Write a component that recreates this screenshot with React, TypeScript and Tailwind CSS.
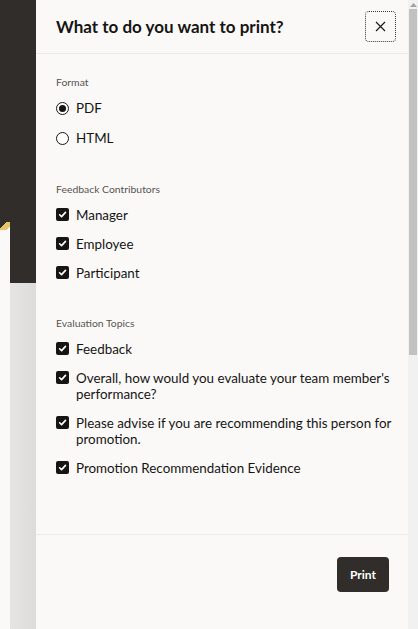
import { useState } from 'react';

const font = { fontFamily: 'Lato, "Open Sans", sans-serif' };

type Option = { id: string; label: string };

const contributors: Option[] = [
  { id: 'manager', label: 'Manager' },
  { id: 'employee', label: 'Employee' },
  { id: 'participant', label: 'Participant' },
];

const topics: Option[] = [
  { id: 'feedback', label: 'Feedback' },
  { id: 'overall', label: "Overall, how would you evaluate your team member's performance?" },
  { id: 'promotion', label: 'Please advise if you are recommending this person for promotion.' },
  { id: 'evidence', label: 'Promotion Recommendation Evidence' },
];

function CheckBox({ checked }: { checked: boolean }) {
  return (
    <span className="mt-[1px] flex h-[13px] w-[13px] shrink-0 items-center justify-center rounded-[2px] bg-[#161513]">
      {checked && (
        <svg width="9" height="9" viewBox="0 0 10 10" fill="none">
          <path d="M1.8 5.3 L4 7.4 L8.3 2.6" stroke="#fff" strokeWidth="1.8" strokeLinecap="round" strokeLinejoin="round" />
        </svg>
      )}
    </span>
  );
}

function Radio({ checked }: { checked: boolean }) {
  return (
    <span className="flex h-[13px] w-[13px] shrink-0 items-center justify-center rounded-full border border-[#161513] bg-white">
      {checked && <span className="h-[7px] w-[7px] rounded-full bg-[#161513]" />}
    </span>
  );
}

function Section({ title, children, listClass }: { title: string; children: React.ReactNode; listClass: string }) {
  return (
    <div className="mb-[34px]">
      <div className="mb-[10px] text-[10.4px] leading-[16px] text-[#58544f]">{title}</div>
      <div className={listClass}>{children}</div>
    </div>
  );
}

export default function App() {
  const [format, setFormat] = useState<'pdf' | 'html'>('pdf');
  const [checked, setChecked] = useState<Record<string, boolean>>(() =>
    Object.fromEntries([...contributors, ...topics].map((o) => [o.id, true]))
  );

  const toggle = (id: string) => setChecked((c) => ({ ...c, [id]: !c[id] }));

  return (
    <div className="flex h-[629px] w-[418px] overflow-hidden bg-[#faf9f8] text-[#161513]" style={font}>
      {/* backdrop behind the drawer */}
      <div className="flex w-[36px] shrink-0">
        <div className="flex w-[10px] flex-col">
          <div className="h-[222px] bg-[#312d2a]" />
          <div className="h-[8px] bg-[linear-gradient(135deg,#312d2a_35%,#e5c46c_35%,#e5c46c_80%,#faf9f8_80%)]" />
          <div className="flex-1 bg-[#faf9f8]" />
        </div>
        <div className="flex w-[26px] flex-col">
          <div className="h-[283px] bg-[#312d2a]" />
          <div className="flex-1 bg-[linear-gradient(90deg,#e6e5e3,#dedcda)]" />
        </div>
      </div>

      {/* drawer */}
      <div className="flex flex-1 flex-col bg-[#faf9f8]">
        <div className="flex h-[54px] shrink-0 items-center justify-between border-b border-[#ecebe9] pl-[20px] pr-[12px]">
          <h2 className="text-[17px] font-bold">What to do you want to print?</h2>
          <button className="flex h-[31px] w-[31px] items-center justify-center rounded-[4px] border border-dotted border-[#3a3632]">
            <svg width="11" height="11" viewBox="0 0 11 11">
              <path d="M1 1 L10 10 M10 1 L1 10" stroke="#161513" strokeWidth="1.1" />
            </svg>
          </button>
        </div>

        <div className="flex-1 pl-[20px] pr-[12px] pt-[20px]">
          <Section title="Format" listClass="flex flex-col gap-[13px]">
            {(['pdf', 'html'] as const).map((f) => (
              <label key={f} className="flex cursor-pointer items-center gap-[7px] text-[13.4px]" onClick={() => setFormat(f)}>
                <Radio checked={format === f} />
                <span className="leading-[17px]">{f.toUpperCase()}</span>
              </label>
            ))}
          </Section>

          <Section title="Feedback Contributors" listClass="mt-[2px] flex flex-col gap-[13px]">
            {contributors.map((o) => (
              <label key={o.id} className="flex cursor-pointer items-start gap-[7px] text-[13.4px]" onClick={() => toggle(o.id)}>
                <CheckBox checked={checked[o.id]} />
                <span className="leading-[16px]">{o.label}</span>
              </label>
            ))}
          </Section>

          <Section title="Evaluation Topics" listClass="mt-[4px] flex flex-col gap-[13px]">
            {topics.map((o) => (
              <label key={o.id} className="flex cursor-pointer items-start gap-[7px] text-[13.4px]" onClick={() => toggle(o.id)}>
                <CheckBox checked={checked[o.id]} />
                <span className="leading-[16px]">{o.label}</span>
              </label>
            ))}
          </Section>
        </div>

        <div className="flex h-[95px] shrink-0 items-start justify-end border-t border-[#ecebe9] pr-[19px] pt-[22px]">
          <button className="h-[35px] rounded-[4px] bg-[#312d2a] px-[13px] text-[12px] font-bold text-white">Print</button>
        </div>
      </div>

      {/* scrollbar */}
      <div className="flex w-[10px] shrink-0 flex-col items-center bg-[#f1f1f1]">
        <svg className="mt-[3px]" width="7" height="4" viewBox="0 0 7 4">
          <path d="M0 4 L3.5 0 L7 4 Z" fill="#a3a3a3" />
        </svg>
        <div className="mt-[2px] h-[346px] w-[8px] bg-[#c1c1c1]" />
      </div>
    </div>
  );
}
